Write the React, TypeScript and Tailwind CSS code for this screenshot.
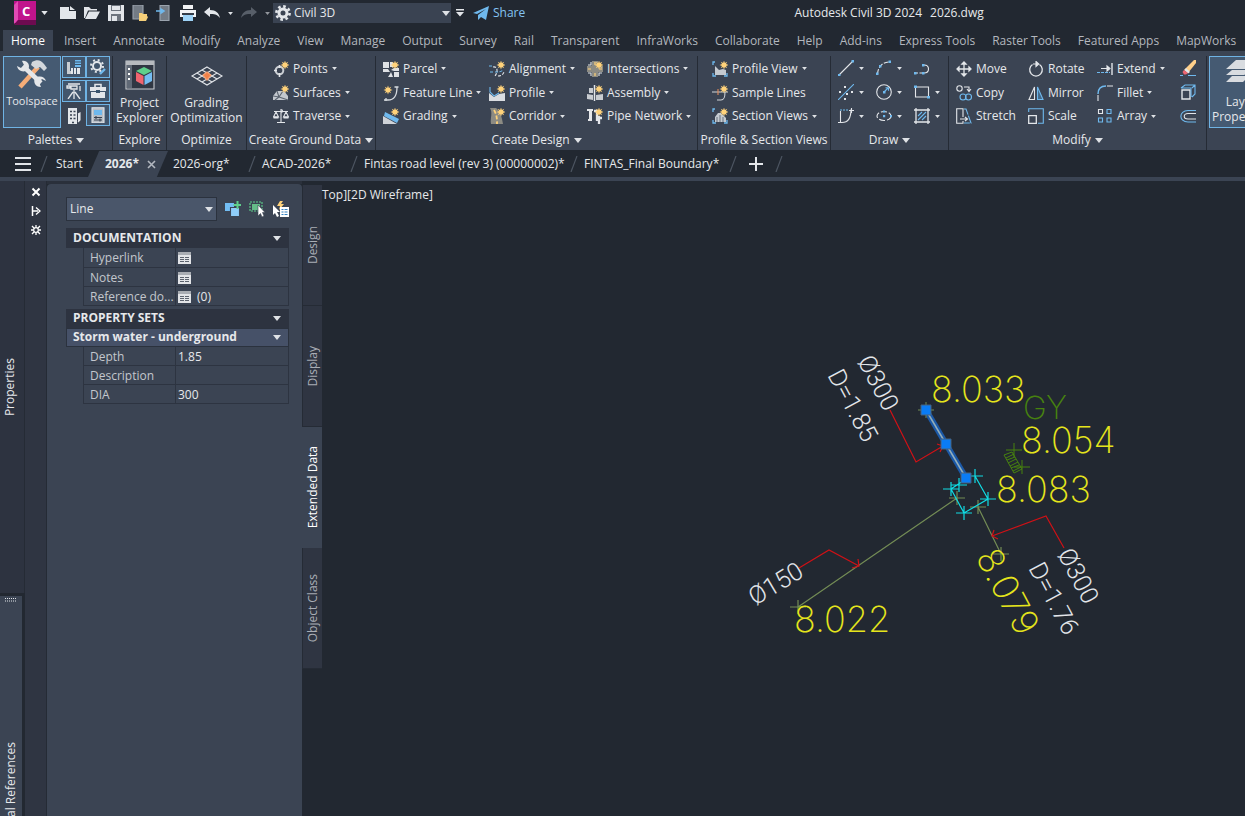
import type { ReactNode } from "react";

const W = "#e3e6ea";
const B = "#6fb9ee";
const Y = "#ffd27a";
const G = "#9ba4ae";

function Icon({ children, size = 16, box = 16 }: { children: ReactNode; size?: number; box?: number }) {
  return (
    <svg width={size} height={size} viewBox={`0 0 ${box} ${box}`} fill="none" stroke={W} strokeWidth="1.1" className="shrink-0" aria-hidden="true">
      {children}
    </svg>
  );
}

const Burst = ({ x = 12, y = 4 }: { x?: number; y?: number }) => (
  <path
    transform={`translate(${x} ${y})`}
    fill={Y}
    stroke="none"
    d="M0-4.5L.9-2 3.2-3.2 2-.9 4.5 0 2 .9 3.2 3.2.9 2 0 4.5-.9 2-3.2 3.2-2 .9-4.5 0-2-.9-3.2-3.2-.9-2Z"
  />
);

const Caret = ({ big = false }: { big?: boolean }) => (
  <svg width={big ? 8 : 5} height={big ? 5 : 3} viewBox="0 0 8 5" className="shrink-0" aria-hidden="true">
    <path d="M0 0h8L4 5Z" fill="#dfe2e6" />
  </svg>
);

const icons: Record<string, ReactNode> = {
  points: (<><circle cx="6.500" cy="9.500" r="3.800" strokeWidth="2" stroke="#c9cdd2" /><path d="M6.500 4v3M1 9.500h3M6.500 12v4" strokeWidth="1.600" /><Burst /></>),
  surfaces: (<><path d="M0 11L4 6h7l4 5v4H0Z" fill="#c3c8ce" stroke="none" /><path d="M0 11l6 1 4-6M6 12l9 3M4 6l2 6-4 3" stroke="#5b6470" /><Burst /></>),
  traverse: (<><path d="M8 1v13M4 14.500h8M1 3.500h14M8 1.500a1.500 1.500 0 1 1 0 3" /><path d="M.500 9L3 4l2.500 5ZM10.500 9L13 4l2.500 5Z" /><path d="M.500 9.500h5M10.500 9.500h5" strokeWidth="1.800" /></>),
  parcel: (<><path d="M0 1h6v6H0ZM7 1h3v5H7ZM0 8h5l2 3H0ZM8 9l3-2h5v3h-5ZM8 11l2 5H5l2-3ZM11 11h5v5h-5Z" fill="#dfe2e5" stroke="none" /><Burst /></>),
  feature: (<><path d="M1 15h4c6 0 9-4 9-13M11.500 2h4M3 13v3" stroke="#d7dbe0" strokeWidth="1.300" /><Burst x={5} y={5} /></>),
  grading: (<><path d="M0 8v8h14Z" fill="#cfd3d8" stroke="none" /><path d="M2 4l14 7-2 4L1 8Z" fill={B} stroke="none" /><Burst /></>),
  alignment: (<><path d="M0 5h4M1 11h3M6 11c3 0 6 0 8-2" stroke={B} strokeDasharray="3 1.500" /><path d="M4 6c5-1 5 5 2 9M9 15c4 0 5-2 6-4" strokeDasharray="3 1.500" /><Burst /></>),
  profile: (<><path d="M0 16V8l5 4 5-3 6-1v8Z" fill="#dadde1" stroke="none" /><path d="M1 2v5l4 4 5-3" stroke={B} /><Burst /></>),
  corridor: (<><path d="M1 0c3 5 0 10 1 16h12C13 9 11 3 7 0Z" fill="#8c8b83" stroke="none" /><path d="M5 2c3 5 3 9 3 14" stroke={Y} strokeWidth="1.800" strokeDasharray="4 2" /><Burst /></>),
  intersections: (<><path d="M5 0h6v5h5v6h-5v5H5v-5H0V5h5Z" fill="#8c8b83" stroke="none" /><path d="M8 1v3M1 8h3M8 12v3M12 8h3" stroke={Y} strokeWidth="1.200" /><path d="M1 4h3V1M1 12h3v3M15 12h-3v3" /><Burst /></>),
  assembly: (<><path d="M7.500 0v16" strokeWidth="1.500" /><path d="M0 9l6 1v5l-6-1ZM9 10l7-1v6l-7 0ZM2 3h4v5H2Z" fill="#c8ccd1" stroke="none" /><Burst /></>),
  pipe: (<><path d="M0 1h6v2H5v10H1v-2h1V3H0Z" fill="#e5e7ea" stroke="none" /><path d="M7 3h3v10M12 8v8M10 10h5" strokeWidth="2.300" /><Burst /></>),
  profileView: (<><path d="M3 1H1v3M1 12v3h3M12 15h3v-3" stroke={B} strokeWidth="1.300" /><path d="M3 14V5l4 4 4-1 3 1v5Z" fill="#c5cad0" stroke="none" /><Burst /></>),
  sample: (<><path d="M0 7h16M5 15h4c3 0 4-2 4-8" stroke="#cfd3d8" /><path d="M6 4v6" stroke="#e08a5a" /><Burst /></>),
  sectionView: (<><path d="M3 1H1v3M1 12v3h3M12 15h3v-3" stroke={B} strokeWidth="1.300" /><path d="M3 14V9l3-4h3l5 5v4Z" fill="#c5cad0" stroke="none" /><path d="M5 9v5M8 7v7M11 9v5" stroke="#727b87" /><Burst /></>),
  line: (<><path d="M1.500 14.500l13-13" /><path d="M0 14h2.500v2H0ZM13.500 0H16v2.500h-2.500Z" fill={B} stroke="none" /></>),
  arc: (<><path d="M1.500 14C2 7 6 2 14 2" strokeDasharray="5 1.500" /><path d="M0 12.500h2.500V15H0ZM3 5h2.500v2.500H3ZM12.500.500H15V3h-2.500Z" fill={B} stroke="none" /></>),
  polyline: (<><path d="M1 13h8" strokeDasharray="3 1.500" /><path d="M10 13c6 0 6-8 0-8" /><path d="M0 12h2.500v2.500H0ZM8 12h2.500v2.500H8ZM8 4h2.500v2.500H8Z" fill={B} stroke="none" /></>),
  xline: (<><path d="M0 16L16 0" stroke={B} /><path d="M1 7h2v2H1ZM6 2h2v2H6ZM8 9h2v2H8ZM13 7h2v2h-2ZM6 14h2v2H6Z" fill={W} stroke="none" /></>),
  circle: (<><circle cx="8" cy="8" r="7.300" /><path d="M8 8l4-4M9.500 3.800h3v3" stroke={B} /><path d="M7 7h2.500v2.500H7Z" fill={B} stroke="none" /></>),
  rect: (<><path d="M1.500 3h13v10h-13Z" /><path d="M0 1.500h3V4H0ZM13 12h3v2.500h-3Z" fill={B} stroke="none" /></>),
  region: (<><path d="M2.500 3v12M0 14.500h4c6 0 9-4 9-13M11 2.500h5M13.500 0v5" /><path d="M2 2h9" stroke={B} strokeDasharray="2 1" /></>),
  ellipse: (<><ellipse cx="8" cy="8" rx="7" ry="4.500" strokeDasharray="6 2" /><path d="M7 7h2.200v2.200H7ZM7 2.500h2.200v2H7ZM14 7h2v2.200h-2Z" fill={B} stroke="none" /></>),
  hatch: (<><path d="M0 2h16M0 14h16M2 0v16M14 0v16" strokeWidth="1.300" /><path d="M4 8l4-4M4 12l8-8M8 12l4-4" stroke={B} /></>),
  move: (<path d="M8 2v12M2 8h12M6 3L8 1l2 2ZM6 13l2 2 2-2ZM3 6L1 8l2 2ZM13 6l2 2-2 2Z" strokeWidth="1.300" fill={W} />),
  copy: (<><circle cx="3.500" cy="3.500" r="2.700" /><path d="M8 2h5v4M11 4l2 2.500L15 4" /><circle cx="7" cy="12" r="3" stroke={B} /><circle cx="12.500" cy="12" r="3" stroke={B} /></>),
  stretch: (<><path d="M7 9V.700H.700v14.600H7V13M4 11h7M9 9l2.500 2L9 13" /><path d="M8 1h2l5 14H8" stroke={B} strokeDasharray="8 1" /></>),
  rotate: (<><path d="M11.500 3.500a6.300 6.300 0 1 1-7 0" strokeWidth="1.300" /><path d="M5 3h4M8 .500L10.800 3 8 5.500Z" fill={W} /></>),
  mirror: (<><path d="M6.500 2v12.500H1Z" /><path d="M9.500 2v12.500H15Z" stroke={B} fill="#456989" /></>),
  scale: (<><path d="M0.700 4V.700h14.600v14.600H10" stroke={B} /><path d="M.700 7.700h7.600v7.600H.700Z" strokeWidth="1.300" /></>),
  extend: (<><path d="M15 2v12" strokeWidth="1.400" /><path d="M4 7.500h8M10 5l3 2.500-3 2.500Z" fill={W} /><path d="M0 11.500h13" stroke={B} strokeDasharray="3 1" /></>),
  fillet: (<><path d="M1 16v-6M10 1h6" /><path d="M1 9C1 4 4 1 9 1" stroke={B} strokeWidth="1.500" /></>),
  array: (<><path d="M1.500 1.500h4v4h-4Z" /><path d="M10 1.500h4v4h-4ZM1.500 10h4v4h-4ZM10 10h4v4h-4Z" stroke={B} /></>),
  erase: (<><path d="M4 10L14 0h2v3L8 13Z" fill="#ffd08a" stroke="none" /><path d="M6 8l4 4-2 1.500L4.500 10Z" fill={W} stroke="none" /><path d="M4 10l4 3-2 1.500H4L2.500 12Z" fill="#ee6672" stroke="none" /><path d="M0 15.500h3M8 15.500h8" stroke={B} /></>),
  explode: (<><path d="M2 6h8v9H2Z" strokeWidth="1.400" /><path d="M1 4l4-3h10v9l-3 3M1 4h10v9M12 4l3-3" stroke={B} /></>),
  offset: (<><path d="M16 2.500H8C-1.500 2.500-1.500 14 8 14h8" stroke={B} /><path d="M16 5.500H8C3 5.500 3 11 8 11h8" /></>),
  dataPal: (<><path d="M1 3h3v9h2v3H1Z" fill="#c8ccd1" stroke="none" /><path d="M5 9h2v6H5ZM8 9h2v6H8ZM11 9h3v6h-3Z" fill={W} stroke="none" /><path d="M9 1h6v7H9Z" fill={B} stroke="none" /><path d="M9 3h6M9 5.500h6" stroke="#39536c" /></>),
  gear: (<><circle cx="7" cy="7" r="4" strokeWidth="2" /><circle cx="7" cy="7" r="6" strokeWidth="2" strokeDasharray="2 2.712" /><path d="M10 15l5-5" stroke={B} strokeWidth="2.300" /></>),
  survey: (<><path d="M5 3h6v3H5ZM1 3h3v2H1ZM2 1h12M14 3v5M8 7v3M7 9L2 16M8 9v7M9 9l5 7" strokeWidth="1.300" /></>),
  toolbox: (<><path d="M5 4V1.500h6V4" strokeWidth="1.600" /><path d="M0 4h16v4H0ZM1 9h14v6H1Z" fill={W} stroke="none" /><path d="M6 7h4v3H6Z" fill="#39536c" stroke="none" /></>),
  building: (<><path d="M2 0h9v16H2Z" fill={W} stroke="none" /><path d="M4 3.500h2M7.500 3.500h2M4 7h2M7.500 7h2M4 10.500h2M7.500 10.500h2M6 14.500h2" stroke="#3b4453" strokeWidth="1.500" /><path d="M12 6l2-1v7l-2 2" fill={W} /></>),
  props: (<><path d="M2 .700h12v15H2Z" fill="#b8bec6" /><path d="M4 3h8v5H4Z" fill={B} stroke="none" /><path d="M4 10.500h8M4 13h8M6 9v3M10 11.500v3" stroke="#38414f" /></>),
};

type Cmd = { icon: string; label: string; drop?: boolean };
const c = (icon: string, label: string, drop = true): Cmd => ({ icon, label, drop });

function CommandColumn({ items, className = "" }: { items: Cmd[]; className?: string }) {
  return (
    <div className={`flex shrink-0 flex-col pt-px ${className}`}>
      {items.map((i) => (
        <button key={i.label} type="button" className="flex h-6 items-center gap-1 whitespace-nowrap text-left">
          <Icon>{icons[i.icon]}</Icon>
          <span>{i.label}</span>
          {i.drop && <Caret />}
        </button>
      ))}
    </div>
  );
}

function Panel({ title, drop, className, children }: { title: string; drop?: boolean; className: string; children: ReactNode }) {
  return (
    <section className={`flex shrink-0 flex-col border-r border-[#252b35] ${className}`}>
      <div className="flex h-[72px]">{children}</div>
      <h2 className="flex h-[22px] items-center justify-center gap-1 whitespace-nowrap pt-[2px]">
        {title}
        {drop && <Caret big />}
      </h2>
    </section>
  );
}

const ribbonTabs = ["Home", "Insert", "Annotate", "Modify", "Analyze", "View", "Manage", "Output", "Survey", "Rail", "Transparent", "InfraWorks", "Collaborate", "Help", "Add-ins", "Express Tools", "Raster Tools", "Featured Apps", "MapWorks"];

function TitleBar() {
  return (
    <header className="flex h-[26px] shrink-0 items-center">
      <button type="button" aria-label="Application menu" className="ml-[14px] flex items-center gap-1">
        <svg width="23" height="24" viewBox="0 0 23 24" aria-hidden="true">
          <path d="M0 0h22v22H0Z" fill="#c0148c" />
          <path d="M0 4l4-4v19l-4 4Z" fill="#e24bb5" />
          <path d="M4 19h18v5H0Z" fill="#6d0b50" />
          <text x="8" y="15" fill="#fff" fontSize="13" fontWeight="700" fontFamily="Open Sans, sans-serif">C</text>
        </svg>
        <svg width="7" height="4" viewBox="0 0 8 5"><path d="M0 0h8L4 5Z" fill={W} /></svg>
      </button>
      <div className="ml-3 flex items-center gap-2">
        <button type="button" aria-label="New"><Icon><path d="M0 2h9v4h7v8H0ZM10 1l5 4h-5Z" fill={W} stroke="none" /></Icon></button>
        <button type="button" aria-label="Open"><Icon><path d="M0 13V2h5l2 2h6v1.500H4L1 13ZM5 6.500h11L12 14H1Z" fill={W} stroke="none" /></Icon></button>
        <button type="button" aria-label="Save"><Icon><path d="M0 0h16v16H0Z" fill={W} stroke="none" /><path d="M3 0h10v6H3ZM3 9h10v7H3Z" fill="#6d747d" stroke="none" /><path d="M4 1h8v4H4ZM4 11h5v5H4Z" fill={W} stroke="none" /></Icon></button>
        <button type="button" aria-label="Open from web"><Icon><path d="M1 0h10v14H1Z" fill="#737b85" stroke={G} /><path d="M7 16V8h3l1 1h4v2l1 1-2 4Z" fill="#f5cf79" stroke="none" /></Icon></button>
        <button type="button" aria-label="Save to mobile"><Icon><path d="M4 .500h9v15H4Z" fill="#737b85" stroke={G} /><path d="M0 6h6M5 4l3 2-3 2Z" stroke={B} fill={B} strokeWidth="1.500" /></Icon></button>
        <button type="button" aria-label="Plot"><Icon><path d="M3 0h10v4H3ZM0 5h16v7H0Z" fill="#f1f2f4" stroke="none" /><path d="M2 9h12" stroke="#343c48" strokeWidth="2" /><path d="M3 10h10v6H3Z" fill="#9ed3f7" stroke="none" /></Icon></button>
        <button type="button" aria-label="Undo" className="flex items-center gap-2"><Icon><path d="M0 7l6-5v3c6 0 9 3 10 8-3-4-6-4-10-4v3Z" fill={W} stroke="none" /></Icon><Caret /></button>
        <button type="button" aria-label="Redo" className="flex items-center gap-2 opacity-60"><Icon><path d="M16 7l-6-5v3C4 5 1 8 0 13c3-4 6-4 10-4v3Z" fill="#7c848f" stroke="none" /></Icon><Caret /></button>
      </div>
      <label className="relative ml-[3px] flex h-5 w-[178px] items-center bg-[#3a4352] pl-[2px]">
        <Icon><circle cx="8" cy="8" r="4" strokeWidth="3" /><circle cx="8" cy="8" r="6.600" strokeWidth="2.600" strokeDasharray="2.600 2.580" /></Icon>
        <select aria-label="Workspace" className="min-w-0 flex-1 appearance-none pl-[3px] outline-none"><option>Civil 3D</option></select>
        <span className="pr-[1px]"><Caret big /></span>
      </label>
      <button type="button" aria-label="Customize" className="ml-[5px]"><svg width="8" height="8" viewBox="0 0 8 8"><path d="M0 0h8v1.500H0ZM0 3h8L4 7.500Z" fill={W} /></svg></button>
      <button type="button" className="ml-[9px] flex items-center gap-1 text-[#84c4f2]">
        <Icon><path d="M0 8L16 1l-3 14-5-3-3 3v-5l8-6-9 5Z" fill={B} stroke="none" /></Icon>
        Share
      </button>
      <div className="flex flex-1 justify-center gap-2 whitespace-nowrap pl-2">
        <span>Autodesk Civil 3D 2024</span>
        <span>2026.dwg</span>
      </div>
    </header>
  );
}

function DrawGrid() {
  const rows = [
    [["line", 1], ["arc", 1], ["polyline", 0]],
    [["xline", 1], ["circle", 1], ["rect", 1]],
    [["region", 1], ["ellipse", 1], ["hatch", 1]],
  ] as [string, number][][];
  return (
    <div className="grid grid-cols-[38px_38px_38px] content-start pl-[7px]">
      {rows.flat().map(([name, drop]) => (
        <button key={name} type="button" aria-label={name} className="flex h-6 items-center gap-[5px]">
          <Icon>{icons[name]}</Icon>
          {drop ? <Caret /> : null}
        </button>
      ))}
    </div>
  );
}

function Ribbon() {
  return (
    <div className="flex h-[99px] shrink-0 overflow-hidden bg-[#3b4453] pt-[5px]">
      <Panel title="Palettes" drop className="w-[113px]">
        <button type="button" className="ml-[3px] flex w-[58px] flex-col items-center border border-[#6fb3e4] bg-[#455a72] text-[11px]">
          <Icon size={36} box={36}>
            <path d="M6 30L24 10" stroke="#f5ad78" strokeWidth="4.500" />
            <path d="M18 5c5-3 9-2 12 2l3 4-3 3-4-4-4 2-5-4Z" fill="#d3d7dc" stroke="none" />
            <path d="M9 9l18 17" stroke="#e4e6e9" strokeWidth="4.500" />
            <path d="M3 9l4 2 3-3-2-4c5-1 9 4 6 9-5 3-10 1-11-4ZM32 24l-4-2-3 3 2 5c-6 0-8-5-6-9 5-3 10-1 11 3Z" fill="#e4e6e9" stroke="none" />
          </Icon>
          Toolspace
        </button>
        <div className="ml-[1px] grid grid-cols-[24px_24px] grid-rows-[24px_24px_24px]">
          {["dataPal", "gear", "survey", "toolbox", "building", "props"].map((n) => (
            <button
              key={n}
              type="button"
              aria-label={n}
              className={n === "building" ? "flex items-center justify-center" : "mb-[2px] flex items-center justify-center border border-[#6fb3e4] bg-[#42566d]"}
            >
              <Icon>{icons[n]}</Icon>
            </button>
          ))}
        </div>
      </Panel>
      <Panel title="Explore" className="w-[54px]">
        <button type="button" className="flex w-full flex-col items-center leading-[15px]">
          <span className="pt-[4px] pb-[5px]">
            <Icon size={30} box={30}>
              <path d="M1 1h28v28H1Z" fill="#303743" stroke="#c8ccd1" />
              <path d="M1 1h28v4H1Z" fill="#b6babf" stroke="none" />
              <path d="M2 5h5v23H2Z" fill="#606976" stroke="none" />
              <path d="M4 8v2M4 13v2M4 18v2" stroke="#fff" strokeWidth="2" />
              <path d="M19 7l8 4-8 4-8-4Z" fill="#5fd08c" stroke="none" />
              <path d="M11 12l7.500 4v9L11 21Z" fill="#f0646f" stroke="none" />
              <path d="M27 12l-7.500 4v9l7.500-4Z" fill="#74bdf2" stroke="none" />
            </Icon>
          </span>
          Project<br />Explorer
        </button>
      </Panel>
      <Panel title="Optimize" className="w-[80px]">
        <button type="button" className="flex w-full flex-col items-center leading-[15px]">
          <span className="pt-[3px] pb-[2px]">
            <Icon size={34} box={34}>
              <path d="M17 8l15 9-15 9L2 17ZM12 11l15 9M7 14l15 9M22 11L7 20M27 14l-15 9" />
              <path d="M17 13l4 3-4 5-4-5Z" fill="#f08048" stroke="#f4a070" />
            </Icon>
          </span>
          Grading<br />Optimization
        </button>
      </Panel>
      <Panel title="Create Ground Data" drop className="w-[129px]">
        <CommandColumn className="pl-[26px]" items={[c("points", "Points"), c("surfaces", "Surfaces"), c("traverse", "Traverse")]} />
      </Panel>
      <Panel title="Create Design" drop className="w-[322px]">
        <CommandColumn className="w-[113px] pl-[7px]" items={[c("parcel", "Parcel"), c("feature", "Feature Line"), c("grading", "Grading")]} />
        <CommandColumn className="w-[98px]" items={[c("alignment", "Alignment"), c("profile", "Profile"), c("corridor", "Corridor")]} />
        <CommandColumn items={[c("intersections", "Intersections"), c("assembly", "Assembly"), c("pipe", "Pipe Network")]} />
      </Panel>
      <Panel title="Profile & Section Views" className="w-[133px]">
        <CommandColumn className="pl-[14px]" items={[c("profileView", "Profile View"), c("sample", "Sample Lines", false), c("sectionView", "Section Views")]} />
      </Panel>
      <Panel title="Draw" drop className="w-[118px]"><DrawGrid /></Panel>
      <Panel title="Modify" drop className="w-[258px]">
        <CommandColumn className="w-[79px] pl-[7px]" items={[c("move", "Move", false), c("copy", "Copy", false), c("stretch", "Stretch", false)]} />
        <CommandColumn className="w-[69px]" items={[c("rotate", "Rotate", false), c("mirror", "Mirror", false), c("scale", "Scale", false)]} />
        <CommandColumn className="w-[83px]" items={[c("extend", "Extend"), c("fillet", "Fillet"), c("array", "Array")]} />
        <div className="flex flex-col">
          {["erase", "explode", "offset"].map((n) => (
            <button key={n} type="button" aria-label={n} className="flex h-6 items-center"><Icon>{icons[n]}</Icon></button>
          ))}
        </div>
      </Panel>
      <button type="button" className="ml-[2px] flex h-[72px] w-[64px] shrink-0 flex-col items-center border border-[#6fb3e4] bg-[#455a72] leading-[15px]">
        <span className="pb-[1px]">
          <Icon size={36} box={36}>
            <path d="M13 3h22L25 12H3ZM9 13h20l-8 5H3ZM9 19h17l-6 6H3Z" fill="#d9dce0" stroke="none" />
            <path d="M22 17h14v18H22Z" fill="#eceef0" stroke="none" />
            <path d="M24 19h12v7H24Z" fill={B} stroke="#34506b" />
            <path d="M25 30h11" stroke="#34506b" />
          </Icon>
        </span>
        Layer<br />Properties
      </button>
    </div>
  );
}

const Slash = () => (
  <svg width="10" height="16" viewBox="0 0 10 16" className="shrink-0" aria-hidden="true"><path d="M2 16L8 0" stroke="#4d5561" strokeWidth="1.200" /></svg>
);

function FileTabs() {
  return (
    <nav className="flex h-[27px] shrink-0 items-center whitespace-nowrap pt-px">
      <button type="button" aria-label="Menu" className="ml-[15px] flex flex-col gap-1">
        <span className="h-[2px] w-4 bg-[#e3e6ea]" /><span className="h-[2px] w-4 bg-[#e3e6ea]" /><span className="h-[2px] w-4 bg-[#e3e6ea]" />
      </button>
      <span className="ml-2"><Slash /></span>
      <button type="button" className="w-[39px] pl-[7px] text-left">Start</button>
      <div className="flex h-[26px] w-[80px] items-center gap-2 bg-[#3b4453] pl-[17px] font-bold [clip-path:polygon(14%_0,100%_0,86%_100%,0_100%)]">
        <button type="button">2026*</button>
        <button type="button" aria-label="Close tab"><svg width="9" height="9" viewBox="0 0 9 9"><path d="M1 1l7 7M8 1L1 8" stroke="#b3b8c0" strokeWidth="1.600" /></svg></button>
      </div>
      <button type="button" className="w-[79px] pl-[5px] text-left">2026-org*</button>
      <Slash />
      <button type="button" className="w-[92px] pl-[5px] text-left">ACAD-2026*</button>
      <Slash />
      <button type="button" className="w-[210px] pl-[5px] text-left">Fintas road level (rev 3) (00000002)*</button>
      <Slash />
      <button type="button" className="w-[149px] pl-[5px] text-left">FINTAS_Final Boundary*</button>
      <Slash />
      <button type="button" aria-label="New tab" className="mx-[11px]"><svg width="14" height="14" viewBox="0 0 14 14"><path d="M7 0v14M0 7h14" stroke={W} strokeWidth="2" /></svg></button>
      <Slash />
    </nav>
  );
}

const Sheet = () => (
  <svg width="13" height="12" viewBox="0 0 13 12" className="shrink-0" aria-hidden="true">
    <path d="M0 0h13v12H0Z" fill="#e2e4e7" /><path d="M0 0h13v3H0Z" fill="#a9adb3" />
    <path d="M2 5.500h4M7 5.500h4M2 7.500h4M7 7.500h4M2 9.500h4M7 9.500h4" stroke="#5b626d" />
  </svg>
);

function PropertyRows({ rows }: { rows: [string, ReactNode][] }) {
  return (
    <table className="ml-[17px] w-[206px] table-fixed border-collapse">
      <tbody>
        {rows.map(([name, value]) => (
          <tr key={name} className="h-[19px]">
            <th scope="row" className="w-[92px] whitespace-pre border border-t-0 border-[#2d3441] p-0 pt-[2px] pl-[6px] text-left font-normal leading-4 text-[#c3c7cd]">{name}</th>
            <td className="border border-t-0 border-[#2d3441] p-0 pt-[2px] pl-[2px] leading-4"><div className="flex items-center gap-[6px]">{value}</div></td>
          </tr>
        ))}
      </tbody>
    </table>
  );
}

function PropertiesPalette() {
  return (
    <>
      <div className="flex w-[22px] shrink-0 flex-col items-center gap-[9px] border-r border-[#252b35] bg-[#2f3542] pt-[6px]">
        <button type="button" aria-label="Close"><svg width="10" height="10" viewBox="0 0 10 10"><path d="M1.500 1.500l7 7M8.500 1.500l-7 7" stroke="#fff" strokeWidth="2" /></svg></button>
        <button type="button" aria-label="Auto-hide"><svg width="10" height="10" viewBox="0 0 10 10"><path d="M1.500 0v10M2 5h5" stroke="#fff" strokeWidth="1.500" /><path d="M5 1.500L9 5 5 8.500" stroke="#fff" strokeWidth="1.300" fill="none" /></svg></button>
        <button type="button" aria-label="Palette settings"><svg width="10" height="10" viewBox="0 0 10 10"><circle cx="5" cy="5" r="2.300" fill="none" stroke="#fff" strokeWidth="1.200" /><path d="M5 0v2.500M5 7.500V10M0 5h2.500M7.500 5H10M1 1l2.200 2.200M9 1L6.800 3.200M1 9l2.200-2.200M9 9L6.800 6.800" stroke="#fff" strokeWidth="1.300" /></svg></button>
      </div>
      <div className="flex w-[255px] shrink-0 flex-col">
        <div className="h-[3px] bg-[#2a303b]" />
        <div className="flex-1 rounded-t-sm bg-[#3b4453] pt-[13px] pl-[19px]">
          <div className="flex items-center gap-2">
            <label className="relative flex h-6 w-[151px] items-center border border-[#2b323e] bg-[#4a566a] pr-[3px]">
              <select aria-label="Object type" className="min-w-0 flex-1 appearance-none pl-[3px] outline-none"><option>Line</option></select>
              <Caret big />
            </label>
            <button type="button" aria-label="Toggle pick add"><Icon><path d="M0 2h9v8H0Z" fill="#72bdf3" stroke="none" /><path d="M5.500 6.500h9v9h-9Z" fill="#8fcdf8" stroke="#3b4453" /><path d="M12.500 0v8M8.500 4h8" stroke="#5fd08c" strokeWidth="2" /></Icon></button>
            <button type="button" aria-label="Select objects"><Icon><path d="M1 1h12v9H1Z" stroke="#5fd08c" strokeDasharray="2 1" /><path d="M3 3h8v6H3Z" fill="#65bd88" stroke="none" /><path d="M9 4v11l2.500-2.500L13 16l2-1-1.500-3.500H16Z" fill="#fff" stroke="#3b4453" strokeWidth=".6" /></Icon></button>
            <button type="button" aria-label="Quick select"><Icon><path d="M0 4v10l2-2 2 4 2-1-2-4h3Z" fill="#fff" stroke="none" /><path d="M7 0L4 5h3l-1 4 5-6H8l2-3Z" fill={Y} stroke="none" /><path d="M7 6h9v10H7Z" fill="#fff" stroke="none" /><path d="M8.500 8.500h2M11.500 8.500h3M8.500 11h2M11.500 11h3M8.500 13.500h2M11.500 13.500h3" stroke="#3381c2" /></Icon></button>
          </div>
          <div className="w-[223px] pt-[7px]">
            <h3 className="flex h-5 items-center justify-between bg-[#2d3340] pr-2 pl-[7px] font-bold">DOCUMENTATION<Caret big /></h3>
            <PropertyRows rows={[["Hyperlink", <Sheet />], ["Notes", <Sheet />], ["Reference do...", <><Sheet />(0)</>]]} />
            <h3 className="mt-[3px] flex h-[19px] items-center justify-between bg-[#2d3340] pr-2 pl-[7px] font-bold">PROPERTY SETS<Caret big /></h3>
            <h4 className="flex h-[19px] items-center justify-between border border-[#2b323e] bg-[#465168] pr-[7px] pl-[6px] font-bold">Storm water - underground<Caret big /></h4>
            <PropertyRows rows={[["Depth", "1.85"], ["Description", ""], ["DIA", "300"]]} />
          </div>
        </div>
      </div>
      <div role="tablist" className="flex w-5 shrink-0 flex-col items-stretch pt-[4px]">
        {["Design", "Display", "Extended Data", "Object Class"].map((t) => (
          <button
            key={t}
            type="button"
            role="tab"
            className={
              t === "Extended Data"
                ? "flex h-[121px] items-center justify-center bg-[#3b4453] pl-[2px] text-white"
                : "flex h-[121px] items-center justify-center border-b border-l border-[#252b35] bg-[#2f3542] pl-px text-[#a9adb5]"
            }
          >
            <span className="rotate-180 whitespace-nowrap leading-4 [writing-mode:vertical-rl]">{t}</span>
          </button>
        ))}
      </div>
    </>
  );
}

const plus = (x: number, y: number) => `M${x - 8} ${y}h16M${x} ${y - 7}v14`;

function Drawing() {
  return (
    <svg className="h-full w-full" fill="none" aria-label="Drawing">
      <g transform="translate(-322 -181)">
        <path d={`M957 498L798 607M978 507L1001 554${plus(957, 498)}${plus(798, 607)}${plus(978, 507)}${plus(1001, 554)}`} stroke="#738c55" strokeWidth="1.200" />
        <path d={`M975 476L988 499L964 513L951 489L966 479${plus(975, 476)}${plus(988, 499)}${plus(964, 513)}${plus(951, 489)}${plus(959, 485)}`} stroke="#10dce4" strokeWidth="1.200" />
        <g stroke="#d01116" strokeWidth="1.200">
          <path d="M890 410L916 462L943 446M937 444l6 2-3 6" />
          <path d="M799 568L829 550L859 566M858 559l1 7-7 2" />
          <path d="M1064 548L1046 516L992 536M994 530l-2 6 6 3" />
        </g>
        <path d={`M1004 455L1012 452L1022 469L1014 473ZM1006 458l8-4M1007 460l8-3M1008 463l8-4M1010 466l8-4M1011 468l8-3M1013 471l8-4${plus(1014, 450)}${plus(1022, 467)}`} stroke="#47820f" />
        <path d="M926 410L966 478" stroke="#1b59a8" strokeWidth="6" />
        <path d="M926 410L966 478" stroke="#95afba" strokeWidth="1.500" />
        <path d="M918 410h16M926 402v16" stroke="#738c55" />
        <path d="M921 405h10v10h-10ZM941 439h10v10h-10ZM961 473h10v10h-10Z" fill="#0a7cf5" stroke="#47627e" />
        <g fill="#e5e51c" stroke="none" fontFamily="Inter, sans-serif" fontSize="36" fontWeight="200">
          <text x="931" y="402">8.033</text>
          <text x="1021" y="453">8.054</text>
          <text x="996" y="502">8.083</text>
          <text x="794" y="632">8.022</text>
          <text transform="translate(975 557) rotate(62)">8.079</text>
          <text x="1023" y="419" fill="#47820f" fontSize="32">GY</text>
        </g>
        <g fill="#e3e6ea" stroke="none" fontFamily="Roboto, sans-serif" fontSize="25" fontWeight="300">
          <text transform="translate(857 361) rotate(62)">Ø300</text>
          <text transform="translate(827 375) rotate(62)">D=1.85</text>
          <text transform="translate(1057 554) rotate(62)">Ø300</text>
          <text transform="translate(1028 568) rotate(62)">D=1.76</text>
          <text transform="translate(755 606) rotate(-31)">Ø150</text>
        </g>
      </g>
    </svg>
  );
}

export default function App() {
  return (
    <div className="flex h-screen flex-col overflow-hidden bg-[#222831] font-['Open_Sans',sans-serif] text-[12px] leading-4 text-[#e6e8eb]">
      <TitleBar />
      <nav className="flex h-[25px] shrink-0 items-end gap-px overflow-hidden whitespace-nowrap pl-[3px] text-[#b3b7be]">
        {ribbonTabs.map((t) => (
          <button key={t} type="button" className={t === "Home" ? "mr-[2px] h-[21px] bg-[#3b4453] px-[8px] text-white" : "h-[21px] px-[8px]"}>{t}</button>
        ))}
      </nav>
      <Ribbon />
      <FileTabs />
      <div className="h-1 shrink-0 bg-[#3b4453]" />
      <main className="flex min-h-0 flex-1">
        <div className="flex w-[25px] shrink-0 flex-col">
          <div className="flex h-[412px] shrink-0 items-center border-r border-[#252b35] bg-[#2d3340] pl-[2px]">
            <span className="rotate-180 [writing-mode:vertical-rl]">Properties</span>
          </div>
          <div className="mt-[3px] flex min-h-0 w-[22px] flex-1 flex-col items-start overflow-hidden bg-[#3b4453] pl-[3px]">
            <svg width="11" height="4" viewBox="0 0 11 4" className="mt-[2px] ml-[2px] shrink-0"><path d="M0 .500h11M0 3h11" stroke={W} strokeDasharray="1 1" /></svg>
            <span className="mt-[140px] shrink-0 rotate-180 whitespace-nowrap [writing-mode:vertical-rl]">External References</span>
          </div>
        </div>
        <PropertiesPalette />
        <section className="relative min-w-0 flex-1">
          <Drawing />
          <p className="absolute top-[6px] left-0">Top][2D Wireframe]</p>
        </section>
      </main>
    </div>
  );
}
